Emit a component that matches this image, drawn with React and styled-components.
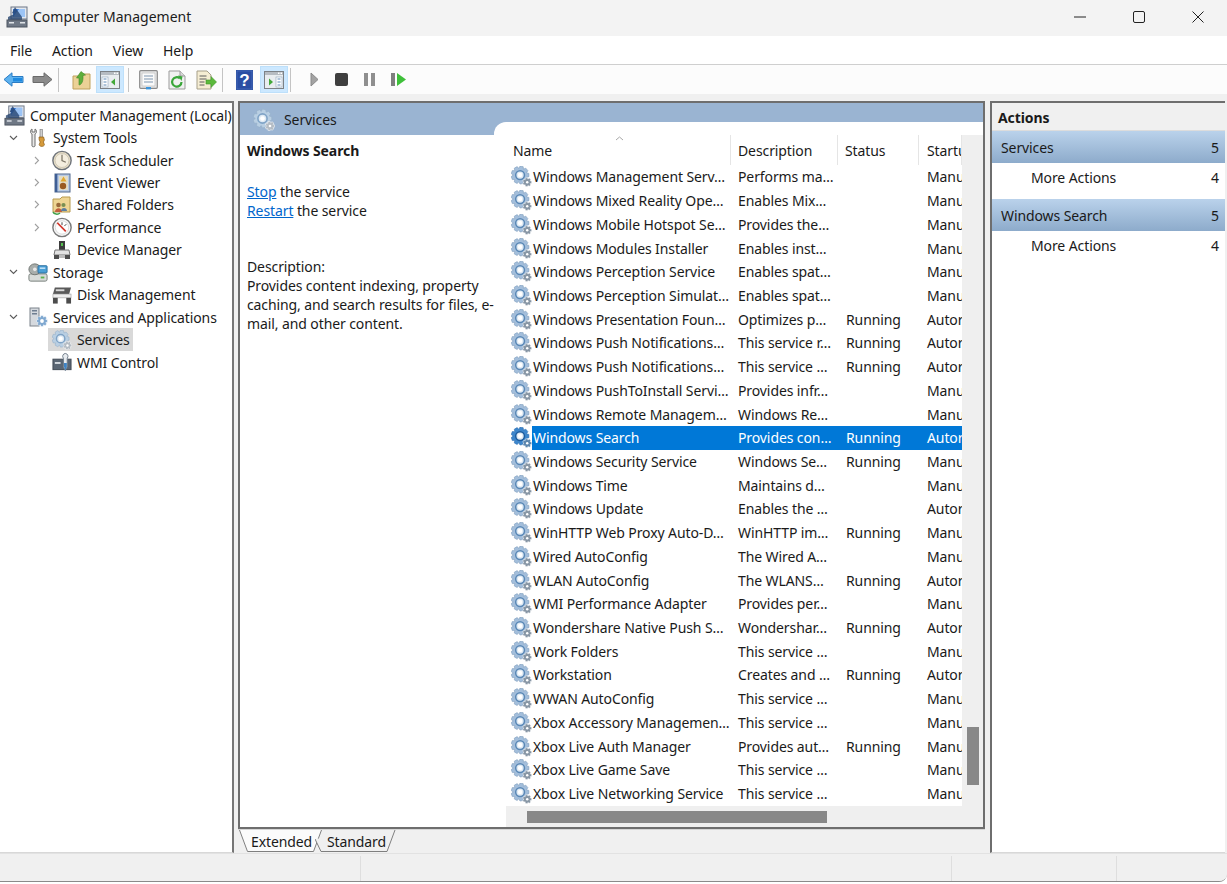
import styled, { createGlobalStyle } from "styled-components";

const GlobalStyle = createGlobalStyle`
  html, body {
    margin: 0;
    padding: 0;
    background: #fff;
    overflow: hidden;
  }
  body {
    font-family: "Noto Sans", "Open Sans", sans-serif;
    font-size: 14px;
    letter-spacing: -0.1px;
    color: #1a1a1a;
  }
`;

const Window = styled.div`
  width: 1227px;
  height: 881px;
  display: flex;
  flex-direction: column;
  background: #f0f0f0;
  border-bottom: 1px solid #8a8a8a;
  border-bottom-right-radius: 8px;
  overflow: hidden;
  box-sizing: content-box;
`;

const TitleBar = styled.div`
  height: 36px;
  flex: none;
  box-sizing: border-box;
  display: flex;
  align-items: center;
  padding: 0 0 3px 6px;
  background: #f3f3f3;
  font-size: 14px;
  letter-spacing: 0;
  color: #1c1c1c;
`;

const TitleText = styled.span`
  margin-left: 5px;
  flex: 1;
`;

const WindowButton = styled.div`
  width: 59px;
  height: 33px;
  display: flex;
  align-items: center;
  justify-content: center;
`;

const MenuBar = styled.div`
  height: 28px;
  flex: none;
  display: flex;
  align-items: center;
  gap: 20px;
  padding-left: 10px;
  background: #fff;
  border-bottom: 1px solid #cfcfcf;
  font-size: 14px;
`;

const Toolbar = styled.div`
  height: 29px;
  flex: none;
  display: flex;
  align-items: center;
  background: #fcfcfc;
`;

const ToolButton = styled.div`
  width: 28px;
  height: 27px;
  flex: none;
  margin-left: ${(p) => p.$gap || 0}px;
  display: flex;
  align-items: center;
  justify-content: center;
  box-sizing: border-box;
  background: ${(p) => (p.$active ? "#cce8ff" : "transparent")};
  border: 1px solid ${(p) => (p.$active ? "#bde0fb" : "transparent")};
`;

const ToolSeparator = styled.div`
  width: 1px;
  height: 24px;
  flex: none;
  margin: 0 ${(p) => p.$right}px 0 ${(p) => p.$left}px;
  background: #c4c4c4;
`;

const Content = styled.div`
  flex: 1;
  display: flex;
  padding-top: 7px;
  min-height: 0;
`;

const TreePane = styled.div`
  width: 234px;
  flex: none;
  box-sizing: border-box;
  padding-top: 1px;
  background: #fff;
  border-top: 2px solid #767676;
  border-right: 2px solid #767676;
  border-bottom: 1px solid #d8d8d8;
`;

const TreeRow = styled.div`
  height: 22.45px;
  display: flex;
  align-items: center;
  padding-left: ${(p) => (p.$level === 0 ? 3 : 6 + (p.$level - 1) * 24)}px;
  white-space: nowrap;
`;

const Chevron = styled.div`
  width: 14px;
  flex: none;
  margin-right: 4px;
  display: flex;
  align-items: center;
  justify-content: center;
`;

const TreeLabel = styled.div`
  height: 23px;
  display: flex;
  align-items: center;
  gap: 5px;
  padding: ${(p) => (p.$root ? "0" : "0 3px 0 4px")};
  background: ${(p) => (p.$selected ? "#d9d9d9" : "transparent")};
`;

const TreeIcon = styled.div`
  width: ${(p) => (p.$root ? 22 : 20)}px;
  flex: none;
  display: flex;
  justify-content: center;
`;

const CenterColumn = styled.div`
  width: 747px;
  flex: none;
  margin-left: 4px;
  display: flex;
  flex-direction: column;
`;

const Frame = styled.div`
  height: 728px;
  flex: none;
  box-sizing: border-box;
  display: flex;
  flex-direction: column;
  background: #fff;
  border: 2px solid #6e6e6e;
`;

const ServicesBar = styled.div`
  height: 32px;
  flex: none;
  display: flex;
  background: #9ab4d2;
`;

const ServicesTitle = styled.div`
  width: 254px;
  flex: none;
  display: flex;
  align-items: center;
  gap: 9px;
  padding-left: 13px;
  box-sizing: border-box;
  padding-top: 1px;
`;

const ServicesNotch = styled.div`
  flex: 1;
  margin-top: 19px;
  background: #fff;
  border-top-left-radius: 12px;
`;

const FrameBody = styled.div`
  flex: 1;
  display: flex;
  min-height: 0;
`;

const DetailPane = styled.div`
  width: 266px;
  flex: none;
  box-sizing: border-box;
  padding: 6px 6px 0 7px;
  line-height: 19px;
`;

const DetailTitle = styled.div`
  font-weight: 700;
  margin-bottom: 22px;
`;

const DetailLine = styled.div`
  white-space: nowrap;
`;

const DetailLink = styled.a`
  color: #0066cc;
  text-decoration: underline;
`;

const DetailDescription = styled.div`
  margin-top: 37px;
  white-space: nowrap;
`;

const ListArea = styled.div`
  flex: 1;
  display: grid;
  grid-template-columns: 456px 21px;
  grid-template-rows: 671px 21px;
  background: #efefef;
`;

const ServiceTable = styled.div`
  background: #fff;
  overflow: hidden;
`;

const HeaderRow = styled.div`
  height: 30px;
  position: relative;
  display: grid;
  grid-template-columns: 225px 107px 81px 43px;
`;

const HeaderCell = styled.div`
  display: flex;
  align-items: center;
  padding-left: ${(p) => p.$pad}px;
  border-right: 1px solid #e5e5e5;
  white-space: nowrap;
  overflow: hidden;
  &:last-child {
    border-right: none;
  }
`;

const SortCaret = styled.svg`
  position: absolute;
  left: 109px;
  top: 1px;
`;

const Row = styled.div`
  height: 23.73px;
  display: grid;
  grid-template-columns: 26px 199px 107px 81px 43px;
  align-items: center;
  white-space: nowrap;
`;

const RowIcon = styled.div`
  display: flex;
  justify-content: flex-end;
  align-items: center;
`;

const Cell = styled.div`
  height: 100%;
  display: flex;
  align-items: center;
  padding-left: ${(p) => p.$pad}px;
  overflow: hidden;
  background: ${(p) => (p.$selected ? "#0078d7" : "transparent")};
  color: ${(p) => (p.$selected ? "#fff" : "inherit")};
`;

const VerticalTrack = styled.div`
  padding: 592px 0 0 5px;
`;

const VerticalThumb = styled.div`
  width: 12px;
  height: 58px;
  background: #888;
`;

const HorizontalTrack = styled.div`
  padding: 5px 0 0 21px;
`;

const HorizontalThumb = styled.div`
  width: 300px;
  height: 12px;
  background: #888;
`;

const TabStrip = styled.div`
  height: 23px;
  flex: none;
  display: flex;
  padding-left: 1px;
  border-top: 1px solid #d6d6d6;
  box-sizing: border-box;
`;

const Tab = styled.div`
  position: relative;
  width: ${(p) => p.$width}px;
  padding-left: ${(p) => p.$pad}px;
  box-sizing: border-box;
  height: 22px;
  line-height: 23px;
  white-space: nowrap;
`;

const TabShape = styled.svg`
  position: absolute;
  left: 0;
  top: 0;
  z-index: 0;
`;

const TabText = styled.span`
  position: relative;
`;

const ActionsPane = styled.div`
  width: 235px;
  flex: none;
  margin-left: 5px;
  box-sizing: border-box;
  background: #fff;
  border-top: 2px solid #6e6e6e;
  border-left: 2px solid #6e6e6e;
  border-bottom: 1px solid #d8d8d8;
`;

const ActionsTitle = styled.div`
  height: 28px;
  box-sizing: border-box;
  display: flex;
  align-items: center;
  padding: 2px 0 0 6px;
  background: #f0f0f0;
  font-weight: 700;
  border-bottom: 1px solid #dcdcdc;
`;

const ActionGroup = styled.div`
  height: 32px;
  margin-top: ${(p) => p.$top}px;
  display: flex;
  align-items: center;
  justify-content: space-between;
  padding: 0 6px 0 9px;
  background: linear-gradient(#bad2eb, #8dabcb);
`;

const ActionItem = styled.div`
  height: 30px;
  box-sizing: border-box;
  display: flex;
  align-items: center;
  justify-content: space-between;
  padding: 0 6px 2px 39px;
`;

const StatusBar = styled.div`
  height: 28px;
  flex: none;
  display: grid;
  grid-template-columns: 361px 591px 165px 1fr;
  background: #f0f0f0;
  border-top: 1px solid #e2e2e2;
  box-sizing: border-box;
`;

const StatusCell = styled.div`
  border-right: 1px solid #dedede;
  margin-top: 2px;
  &:last-child {
    border-right: none;
  }
`;

/* ---- drawings ---- */

function gearPath(cx, cy, outer, inner, teeth) {
  const step = (Math.PI * 2) / teeth;
  let d = "";
  for (let i = 0; i < teeth; i++) {
    const a = i * step;
    const pts = [
      [inner, a - step * 0.5],
      [outer, a - step * 0.26],
      [outer, a + step * 0.26],
      [inner, a + step * 0.5],
    ];
    pts.forEach(([r, t], j) => {
      const x = (cx + r * Math.cos(t)).toFixed(2);
      const y = (cy + r * Math.sin(t)).toFixed(2);
      d += `${i === 0 && j === 0 ? "M" : "L"}${x} ${y}`;
    });
  }
  return d + "Z";
}

const bigGear = gearPath(9.5, 9.5, 9.4, 7.2, 9);
const smallGear = gearPath(17, 17, 4.8, 3.4, 7);

function GearIcon({ selected, faded, size = 21 }) {
  const body = selected ? "#3d86cc" : faded ? "#b9cfe3" : "#a3bedb";
  const edge = selected ? "#2a6cae" : faded ? "#93aec8" : "#7c9abb";
  const ring = selected ? "#1d5c9e" : faded ? "#7fa3c6" : "#5a88b6";
  const small = faded ? "#b4bcc4" : selected ? "#5c86ad" : "#8796a5";
  return (
    <svg width={size} height={size} viewBox="0 0 22 22">
      <path d={bigGear} fill={body} stroke={edge} strokeWidth="0.6" />
      <circle cx="9.5" cy="9.5" r="4.6" fill="#dfeaf4" stroke={ring} strokeWidth="1.6" />
      <circle cx="9.5" cy="9.5" r="2.3" fill="#fff" />
      <path d={smallGear} fill={small} stroke="#fff" strokeWidth="0.5" />
      <circle cx="17" cy="17" r="1.3" fill="#fff" />
    </svg>
  );
}

function ComputerIcon({ size = 22 }) {
  return (
    <svg width={size} height={size} viewBox="0 0 22 22">
      <rect x="5" y="1" width="16" height="12" fill="#e4e8ee" stroke="#6c7686" />
      <rect x="7" y="3" width="12" height="8" fill="#3c7fe0" />
      <path d="M7 11l6-8h6v8z" fill="#9cc4f5" />
      <path d="M9 1l-3 6 2 1-6 3v3h14v-3z" fill="#27456f" opacity="0.8" />
      <rect x="1" y="14" width="20" height="7" fill="#6f7885" stroke="#4d5560" />
      <rect x="3" y="16" width="5" height="1.5" fill="#dfe3e8" />
      <rect x="14" y="16" width="5" height="1.5" fill="#dfe3e8" />
    </svg>
  );
}

function ToolsIcon() {
  return (
    <svg width="20" height="20" viewBox="0 0 20 20">
      <path d="M4 1C2 2 2 5 4 6v12c0 1 3 1 3 0V6c2-1 2-4 0-5v3H4z" fill="#e8e8e8" stroke="#6c6c6c" />
      <rect x="12" y="1.5" width="2.5" height="8" fill="#cfcfcf" stroke="#777" strokeWidth="0.6" />
      <path d="M11 9h4.6l.8 3-1 2 1 2.6c0 2.4-5.2 2.4-5.2 0l1-2.6-1-2z" fill="#d59a3a" stroke="#8a5a16" strokeWidth="0.7" />
    </svg>
  );
}

function ClockIcon() {
  return (
    <svg width="21" height="21" viewBox="0 0 21 21">
      <circle cx="10.5" cy="10.5" r="9.6" fill="#e8dfc8" stroke="#6f747b" strokeWidth="1.5" />
      <circle cx="10.5" cy="10.5" r="7.3" fill="#f4eedf" stroke="#b9b2a0" strokeWidth="0.6" />
      <path d="M10.5 4.5v6.2l4 1.6" fill="none" stroke="#7c7567" strokeWidth="1.3" />
    </svg>
  );
}

function EventIcon() {
  return (
    <svg width="20" height="20" viewBox="0 0 20 20">
      <rect x="3" y="1" width="15" height="18" fill="#b6c9e4" stroke="#50688d" />
      <rect x="3" y="1" width="2.4" height="18" fill="#3f5f95" />
      <rect x="7" y="3" width="9" height="14" fill="#e3ddc6" />
      <path d="M11.5 3.5l3 5h-6z" fill="#e0a730" />
      <circle cx="11" cy="13" r="3.2" fill="#9a5b22" />
    </svg>
  );
}

function SharedIcon() {
  return (
    <svg width="20" height="20" viewBox="0 0 20 20">
      <path d="M1 4h7l2-2h8v15H1z" fill="#eed593" stroke="#b79a4f" />
      <circle cx="6.5" cy="10" r="2.3" fill="#9a6a3a" />
      <path d="M3 17c0-5 7-5 7 0z" fill="#c15f3c" />
      <circle cx="11.5" cy="10" r="2.1" fill="#7a8f52" />
      <path d="M9 16c0-4 6-4 6 0z" fill="#5c7d9e" />
      <path d="M1 17a4 3 0 0 0 7 1" fill="none" stroke="#3fa04a" strokeWidth="1.5" />
    </svg>
  );
}

function PerformanceIcon() {
  return (
    <svg width="21" height="21" viewBox="0 0 21 21">
      <circle cx="10.5" cy="10.5" r="9.6" fill="#f7f7f7" stroke="#7a7a7a" strokeWidth="1.5" />
      <circle cx="10.5" cy="10.5" r="7" fill="#fff" stroke="#c4c4c4" strokeWidth="0.6" />
      <path d="M5.5 5.5l9 9" stroke="#d3362b" strokeWidth="1.8" />
      <path d="M10.5 5v3M15 7l-2 2" stroke="#3f3f3f" strokeWidth="1" />
    </svg>
  );
}

function DeviceIcon() {
  return (
    <svg width="20" height="20" viewBox="0 0 20 20">
      <rect x="7" y="1" width="6" height="9" fill="#3c3c3c" />
      <rect x="9" y="3" width="2" height="3" fill="#55c14f" />
      <path d="M3 10h14l1 5H2z" fill="#e3e3e3" stroke="#777" />
      <rect x="2" y="15" width="5" height="4" fill="#4e4e4e" />
      <rect x="13" y="15" width="5" height="4" fill="#4e4e4e" />
      <rect x="7" y="15" width="6" height="3" fill="#bdbdbd" />
    </svg>
  );
}

function StorageIcon() {
  return (
    <svg width="22" height="21" viewBox="0 0 22 21">
      <rect x="1" y="12" width="20" height="8" rx="2" fill="#d8dbd9" stroke="#727a75" />
      <rect x="14" y="15" width="4" height="2" fill="#5cb04e" />
      <ellipse cx="7.5" cy="7" rx="6.5" ry="6" fill="#a8adab" stroke="#6f7471" />
      <circle cx="7.5" cy="7" r="2" fill="#e8e8e8" />
      <rect x="11" y="3" width="10" height="8" rx="1" fill="#4a9fd6" stroke="#2b6f9f" />
      <rect x="13" y="5" width="6" height="1.5" fill="#cfeafb" />
    </svg>
  );
}

function DiskIcon() {
  return (
    <svg width="21" height="20" viewBox="0 0 21 20">
      <path d="M3 2h17l-2 7H1z" fill="#5a5a5a" />
      <rect x="4" y="4" width="9" height="2" fill="#d9d9d9" />
      <rect x="1" y="9" width="19" height="4" fill="#eee" stroke="#999" strokeWidth="0.6" />
      <rect x="1" y="13" width="5" height="6" fill="#4c4c4c" />
      <rect x="15" y="13" width="5" height="6" fill="#4c4c4c" />
    </svg>
  );
}

function AppsIcon() {
  return (
    <svg width="20" height="20" viewBox="0 0 20 20">
      <rect x="2" y="1" width="9" height="18" fill="#d5d9de" stroke="#7c838c" />
      <rect x="4" y="3" width="5" height="1.5" fill="#6f7e91" />
      <rect x="4" y="6" width="5" height="1.5" fill="#6f7e91" />
      <path d={gearPath(14, 14, 5.6, 4.1, 8)} fill="#7fa8d0" stroke="#fff" strokeWidth="0.5" />
      <circle cx="14" cy="14" r="1.9" fill="#fff" />
    </svg>
  );
}

function WmiIcon() {
  return (
    <svg width="21" height="21" viewBox="0 0 21 21">
      <rect x="1" y="7" width="19" height="11" fill="#5a6674" stroke="#3f4853" />
      <rect x="3" y="10" width="6" height="2" fill="#d5dae0" />
      <path d="M14 1a3 3 0 0 0-2 5v9l2 4 2-4V6a3 3 0 0 0-2-5z" fill="#e7ebef" stroke="#6e7a88" />
      <path d="M12.6 11h3v4l-1.5 4-1.5-4z" fill="#3f83c4" />
    </svg>
  );
}

const ChevronDown = () => (
  <svg width="9" height="6" viewBox="0 0 9 6">
    <path d="M1 1l3.5 3.5L8 1" fill="none" stroke="#5c5c5c" strokeWidth="1.1" />
  </svg>
);

const ChevronRight = () => (
  <svg width="6" height="9" viewBox="0 0 6 9">
    <path d="M1 1l3.5 3.5L1 8" fill="none" stroke="#a0a0a0" strokeWidth="1.1" />
  </svg>
);

const ArrowIcon = ({ back }) => (
  <svg width="21" height="15" viewBox="0 0 21 15">
    {back ? (
      <>
        <path d="M1 7.5L9 .8v3.7h11v6H9v3.7z" fill="#5eb2ef" stroke="#2b7cc4" />
        <rect x="10" y="6" width="9" height="3.5" fill="#1f8ae0" />
      </>
    ) : (
      <path d="M20 7.5L12 .8v3.7H1v6h11v3.7z" fill="#8b8b8b" stroke="#6a6a6a" />
    )}
  </svg>
);

const FolderUpIcon = () => (
  <svg width="19" height="20" viewBox="0 0 19 20">
    <path d="M1 6h6l1.5-2H18v15H1z" fill="#ecd196" stroke="#c0a15c" />
    <path d="M7 15V8H4.5L9 1.5 13.5 5 11 5.5V8c0 4-2 7-4 7z" fill="#5eae3b" stroke="#3f8a26" strokeWidth="0.6" />
  </svg>
);

const PaneIcon = ({ mirror }) => (
  <svg width="20" height="18" viewBox="0 0 20 18">
    <rect x=".5" y=".5" width="19" height="17" fill="#e9edf0" stroke="#7c8186" />
    <rect x="1" y="1" width="18" height="3" fill="#b6bcc2" />
    <rect x="14" y="1.5" width="1.5" height="1.5" fill="#fff" />
    <rect x="16.5" y="1.5" width="1.5" height="1.5" fill="#fff" />
    {mirror ? (
      <>
        <path d="M5 7.5l4 3.5-4 3.5z" fill="#43a83a" />
        <rect x="12" y="6" width="6" height="10" fill="#fff" stroke="#8fa6bb" strokeWidth="0.6" />
        <path d="M13.5 8h3M13.5 11h3M13.5 14h3" stroke="#5c88b4" />
      </>
    ) : (
      <>
        <rect x="2" y="6" width="6" height="10" fill="#fff" stroke="#8fa6bb" strokeWidth="0.6" />
        <path d="M3.5 8h3M3.5 11h3M3.5 14h3" stroke="#5c88b4" />
        <path d="M15 7.5L11 11l4 3.5z" fill="#43a83a" />
      </>
    )}
  </svg>
);

const PropsIcon = () => (
  <svg width="19" height="20" viewBox="0 0 19 20">
    <rect x=".7" y=".7" width="17.6" height="17.6" rx="1" fill="#e8e8e8" stroke="#8a8a8a" strokeWidth="1.2" />
    <rect x="3" y="3" width="13" height="13" fill="#fafafa" stroke="#b5b5b5" strokeWidth="0.6" />
    <path d="M5 6h9M5 9h9M5 12h9" stroke="#7d94ad" />
    <rect x="7" y="17" width="5" height="2.4" fill="#3c96dd" />
  </svg>
);

const RefreshIcon = () => (
  <svg width="18" height="20" viewBox="0 0 18 20">
    <path d="M1 1h11l5 5v13H1z" fill="#f1f1f1" stroke="#9b9b9b" />
    <path d="M12 1v5h5" fill="#d8d8d8" stroke="#9b9b9b" />
    <path d="M13.5 12a4.7 4.7 0 1 1-1.6-3.6" fill="none" stroke="#3aa63a" strokeWidth="2.2" />
    <path d="M10 5.5l4.5 1-1 4.5z" fill="#3aa63a" />
  </svg>
);

const ExportIcon = () => (
  <svg width="21" height="20" viewBox="0 0 21 20">
    <path d="M1 1h10l4 4v14H1z" fill="#f5edd3" stroke="#a7a08a" />
    <path d="M3.5 6h7M3.5 9h7M3.5 12h5M3.5 15h5" stroke="#5d5d5d" />
    <path d="M10 10h5V6.5l5.5 5.5-5.5 5.5V14h-5z" fill="#5cba3c" stroke="#3f962a" strokeWidth="0.6" />
  </svg>
);

const HelpIcon = () => (
  <svg width="17" height="20" viewBox="0 0 17 20">
    <rect width="17" height="20" fill="#2c4f9f" />
    <rect x="1" y="1" width="15" height="18" fill="#2a4ea3" stroke="#4f74c4" strokeWidth="0.6" />
    <text x="8.5" y="16" textAnchor="middle" fontSize="17" fontWeight="700" fontFamily="Liberation Sans, sans-serif" fill="#fff">?</text>
  </svg>
);

const PlayIcon = () => (
  <svg width="9" height="15" viewBox="0 0 9 15">
    <path d="M1 1l7 6.5L1 14z" fill="#a3a3a3" stroke="#8a8a8a" />
  </svg>
);

const StopIcon = () => (
  <svg width="13" height="13" viewBox="0 0 13 13">
    <rect width="13" height="13" rx="2" fill="#3f3f3f" />
  </svg>
);

const PauseIcon = () => (
  <svg width="11" height="13" viewBox="0 0 11 13">
    <rect width="4" height="13" fill="#8f8f8f" />
    <rect x="7" width="4" height="13" fill="#8f8f8f" />
  </svg>
);

const ResumeIcon = () => (
  <svg width="15" height="13" viewBox="0 0 15 13">
    <rect width="4" height="13" fill="#7f7f7f" />
    <path d="M6 0l9 6.5L6 13z" fill="#3fc03a" />
  </svg>
);

/* ---- data ---- */

const treeItems = [
  { level: 0, label: "Computer Management (Local)", icon: <ComputerIcon size={21} /> },
  { level: 1, label: "System Tools", icon: <ToolsIcon />, open: true },
  { level: 2, label: "Task Scheduler", icon: <ClockIcon />, closed: true },
  { level: 2, label: "Event Viewer", icon: <EventIcon />, closed: true },
  { level: 2, label: "Shared Folders", icon: <SharedIcon />, closed: true },
  { level: 2, label: "Performance", icon: <PerformanceIcon />, closed: true },
  { level: 2, label: "Device Manager", icon: <DeviceIcon /> },
  { level: 1, label: "Storage", icon: <StorageIcon />, open: true },
  { level: 2, label: "Disk Management", icon: <DiskIcon /> },
  { level: 1, label: "Services and Applications", icon: <AppsIcon />, open: true },
  { level: 2, label: "Services", icon: <GearIcon faded size={20} />, selected: true },
  { level: 2, label: "WMI Control", icon: <WmiIcon /> },
];

const services = [
  ["Windows Management Serv…", "Performs ma…", "", "Manu"],
  ["Windows Mixed Reality Ope…", "Enables Mix…", "", "Manu"],
  ["Windows Mobile Hotspot Se…", "Provides the…", "", "Manu"],
  ["Windows Modules Installer", "Enables inst…", "", "Manu"],
  ["Windows Perception Service", "Enables spat…", "", "Manu"],
  ["Windows Perception Simulat…", "Enables spat…", "", "Manu"],
  ["Windows Presentation Foun…", "Optimizes p…", "Running", "Autor"],
  ["Windows Push Notifications…", "This service r…", "Running", "Autor"],
  ["Windows Push Notifications…", "This service …", "Running", "Autor"],
  ["Windows PushToInstall Servi…", "Provides infr…", "", "Manu"],
  ["Windows Remote Managem…", "Windows Re…", "", "Manu"],
  ["Windows Search", "Provides con…", "Running", "Autor"],
  ["Windows Security Service", "Windows Se…", "Running", "Manu"],
  ["Windows Time", "Maintains d…", "", "Manu"],
  ["Windows Update", "Enables the …", "", "Autor"],
  ["WinHTTP Web Proxy Auto-D…", "WinHTTP im…", "Running", "Manu"],
  ["Wired AutoConfig", "The Wired A…", "", "Manu"],
  ["WLAN AutoConfig", "The WLANS…", "Running", "Autor"],
  ["WMI Performance Adapter", "Provides per…", "", "Manu"],
  ["Wondershare Native Push S…", "Wondershar…", "Running", "Autor"],
  ["Work Folders", "This service …", "", "Manu"],
  ["Workstation", "Creates and …", "Running", "Autor"],
  ["WWAN AutoConfig", "This service …", "", "Manu"],
  ["Xbox Accessory Managemen…", "This service …", "", "Manu"],
  ["Xbox Live Auth Manager", "Provides aut…", "Running", "Manu"],
  ["Xbox Live Game Save", "This service …", "", "Manu"],
  ["Xbox Live Networking Service", "This service …", "", "Manu"],
];

function App() {
  return (
    <>
      <GlobalStyle />
      <Window>
        <TitleBar>
          <ComputerIcon />
          <TitleText>Computer Management</TitleText>
          <WindowButton>
            <svg width="12" height="2" viewBox="0 0 12 2">
              <path d="M0 1h12" stroke="#222" strokeWidth="1" />
            </svg>
          </WindowButton>
          <WindowButton>
            <svg width="12" height="12" viewBox="0 0 12 12">
              <rect x=".5" y=".5" width="11" height="11" rx="1.5" fill="none" stroke="#222" />
            </svg>
          </WindowButton>
          <WindowButton>
            <svg width="12" height="12" viewBox="0 0 12 12">
              <path d="M.5.5l11 11M11.5.5l-11 11" stroke="#222" />
            </svg>
          </WindowButton>
        </TitleBar>

        <MenuBar>
          <span>File</span>
          <span>Action</span>
          <span>View</span>
          <span>Help</span>
        </MenuBar>

        <Toolbar>
          <ToolButton $gap={-1}><ArrowIcon back /></ToolButton>
          <ToolButton $gap={1}><ArrowIcon /></ToolButton>
          <ToolSeparator $left={2} $right={8} />
          <ToolButton><FolderUpIcon /></ToolButton>
          <ToolButton $gap={1} $active><PaneIcon /></ToolButton>
          <ToolSeparator $left={4} $right={5} />
          <ToolButton><PropsIcon /></ToolButton>
          <ToolButton $gap={1}><RefreshIcon /></ToolButton>
          <ToolButton $gap={1}><ExportIcon /></ToolButton>
          <ToolSeparator $left={2} $right={7} />
          <ToolButton><HelpIcon /></ToolButton>
          <ToolButton $gap={2} $active><PaneIcon mirror /></ToolButton>
          <ToolSeparator $left={2} $right={8} />
          <ToolButton $gap={1}><PlayIcon /></ToolButton>
          <ToolButton $gap={-1}><StopIcon /></ToolButton>
          <ToolButton><PauseIcon /></ToolButton>
          <ToolButton $gap={1}><ResumeIcon /></ToolButton>
        </Toolbar>

        <Content>
          <TreePane>
            {treeItems.map((item) => (
              <TreeRow key={item.label} $level={item.level}>
                {item.level > 0 && (
                  <Chevron>
                    {item.open && <ChevronDown />}
                    {item.closed && <ChevronRight />}
                  </Chevron>
                )}
                <TreeLabel $root={item.level === 0} $selected={item.selected}>
                  <TreeIcon $root={item.level === 0}>{item.icon}</TreeIcon>
                  <span>{item.label}</span>
                </TreeLabel>
              </TreeRow>
            ))}
          </TreePane>

          <CenterColumn>
            <Frame>
              <ServicesBar>
                <ServicesTitle>
                  <GearIcon faded size={22} />
                  <span>Services</span>
                </ServicesTitle>
                <ServicesNotch />
              </ServicesBar>
              <FrameBody>
                <DetailPane>
                  <DetailTitle>Windows Search</DetailTitle>
                  <DetailLine><DetailLink>Stop</DetailLink> the service</DetailLine>
                  <DetailLine><DetailLink>Restart</DetailLink> the service</DetailLine>
                  <DetailDescription>
                    Description:<br />
                    Provides content indexing, property<br />
                    caching, and search results for files, e-<br />
                    mail, and other content.
                  </DetailDescription>
                </DetailPane>
                <ListArea>
                  <ServiceTable>
                    <HeaderRow>
                      <HeaderCell $pad={7}>Name</HeaderCell>
                      <HeaderCell $pad={7}>Description</HeaderCell>
                      <HeaderCell $pad={7}>Status</HeaderCell>
                      <HeaderCell $pad={8}>Startu</HeaderCell>
                      <SortCaret width="9" height="5" viewBox="0 0 9 5">
                        <path d="M1 4l3.5-3L8 4" fill="none" stroke="#a8a8a8" />
                      </SortCaret>
                    </HeaderRow>
                    {services.map(([name, description, status, startup], i) => {
                      const selected = name === "Windows Search";
                      return (
                        <Row key={i}>
                          <RowIcon><GearIcon selected={selected} /></RowIcon>
                          <Cell $pad={1} $selected={selected}>{name}</Cell>
                          <Cell $pad={7} $selected={selected}>{description}</Cell>
                          <Cell $pad={8} $selected={selected}>{status}</Cell>
                          <Cell $pad={8} $selected={selected}>{startup}</Cell>
                        </Row>
                      );
                    })}
                  </ServiceTable>
                  <VerticalTrack><VerticalThumb /></VerticalTrack>
                  <HorizontalTrack><HorizontalThumb /></HorizontalTrack>
                </ListArea>
              </FrameBody>
            </Frame>
            <TabStrip>
              <Tab $width={76} $pad={12}>
                <TabShape width="84" height="22" viewBox="0 0 84 22">
                  <path d="M.5 0l8 21.5h66L82.5 0" fill="#fbfbfb" stroke="#7f7f7f" />
                </TabShape>
                <TabText>Extended</TabText>
              </Tab>
              <Tab $width={80} $pad={12}>
                <TabShape width="84" height="22" viewBox="0 0 84 22">
                  <path d="M0 9l6 12.5h66L80 0" fill="#f0f0f0" stroke="#7f7f7f" />
                </TabShape>
                <TabText>Standard</TabText>
              </Tab>
            </TabStrip>
          </CenterColumn>

          <ActionsPane>
            <ActionsTitle>Actions</ActionsTitle>
            <ActionGroup $top={0}>
              <span>Services</span>
              <span>5</span>
            </ActionGroup>
            <ActionItem>
              <span>More Actions</span>
              <span>4</span>
            </ActionItem>
            <ActionGroup $top={6}>
              <span>Windows Search</span>
              <span>5</span>
            </ActionGroup>
            <ActionItem>
              <span>More Actions</span>
              <span>4</span>
            </ActionItem>
          </ActionsPane>
        </Content>

        <StatusBar>
          <StatusCell />
          <StatusCell />
          <StatusCell />
          <StatusCell />
        </StatusBar>
      </Window>
    </>
  );
}

export default App;
